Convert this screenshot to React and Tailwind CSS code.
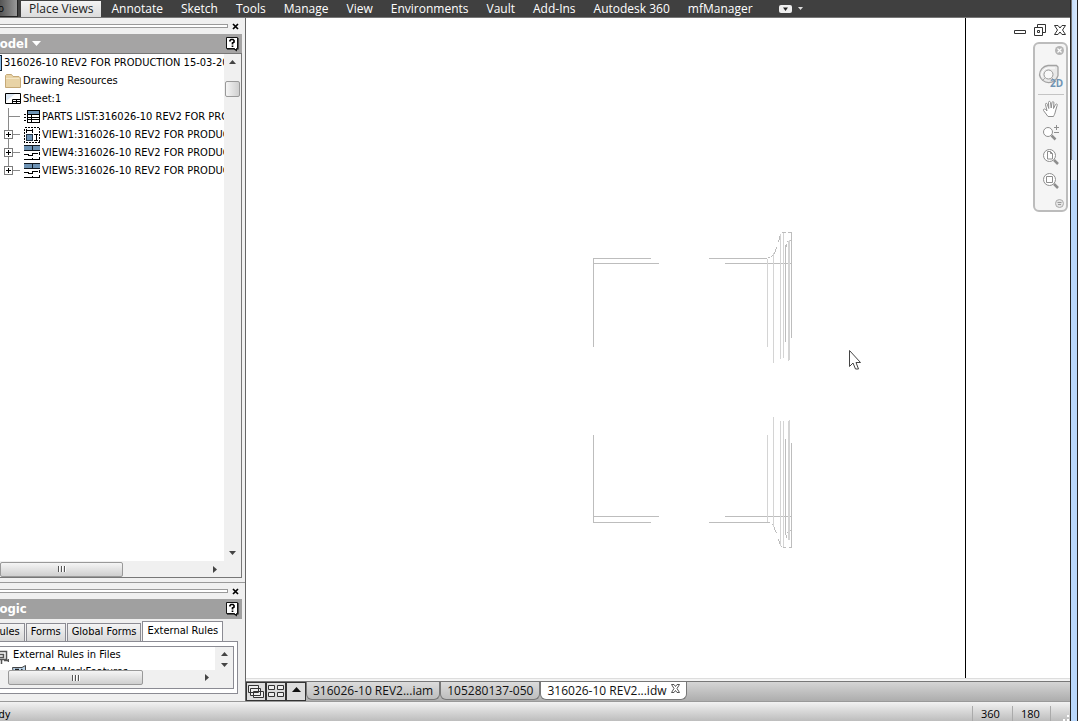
import { useState } from "react";

const ribbonTabs = [
  "Annotate",
  "Sketch",
  "Tools",
  "Manage",
  "View",
  "Environments",
  "Vault",
  "Add-Ins",
  "Autodesk 360",
  "mfManager",
];

const treeViews = [
  { label: "PARTS LIST:316026-10 REV2 FOR PRODUCTION", kind: "parts" },
  { label: "VIEW1:316026-10 REV2 FOR PRODUCTION", kind: "base" },
  { label: "VIEW4:316026-10 REV2 FOR PRODUCTION", kind: "section" },
  { label: "VIEW5:316026-10 REV2 FOR PRODUCTION", kind: "section" },
];

const documents = ["316026-10 REV2...iam", "105280137-050", "316026-10 REV2...idw"];

function Arrow({ dir = "up" }) {
  const paths = {
    up: "M1 6h7L4.500 2z",
    down: "M1 3h7L4.500 7z",
    right: "M3 1v7l4-3.500z",
  };
  return (
    <svg width="9" height="9" className="shrink-0" aria-hidden="true">
      <path d={paths[dir]} fill="#444" />
    </svg>
  );
}

function PanelGrip({ label }) {
  return (
    <div className="flex h-4 items-center gap-px pr-1">
      <div className="h-1 flex-1 border-y border-r border-[#9a9a9a] bg-white" />
      <button type="button" aria-label={`Close ${label}`} className="flex size-3 items-center justify-center">
        <svg width="7" height="7" aria-hidden="true">
          <path d="M1 1l5 5M6 1L1 6" stroke="#000" strokeWidth="1.7" />
        </svg>
      </button>
    </div>
  );
}

function HelpButton({ label }) {
  return (
    <button type="button" aria-label={`${label} help`} className="flex size-4 shrink-0">
      <svg width="15" height="16" viewBox="0 0 15 16" aria-hidden="true">
        <path d="M2 2h11.500v11.500h-1.500v2l-3-2H2z" fill="#000" />
        <path d="M1.500 1.500h11v11h-1v2l-2-2h-8z" fill="#fff" stroke="#111" />
        <path d="M5 5.500V4.500l1-1h2l1 1v1.500L7.500 7v1.500M7.500 9.500V11" fill="none" stroke="#000" strokeWidth="1.700" />
      </svg>
    </button>
  );
}

function Thumb({ className }) {
  return (
    <div
      className={`flex items-center justify-center gap-px rounded-xs border border-[#999] bg-linear-to-b from-[#f5f5f5] to-[#cfcfcf] ${className}`}
    >
      <svg width="8" height="6" shapeRendering="crispEdges" aria-hidden="true">
        <path d="M.5 0v6M3.500 0v6M6.500 0v6" stroke="#555" />
        <path d="M1.500 0v6M4.500 0v6M7.500 0v6" stroke="#fff" />
      </svg>
    </div>
  );
}

function FolderIcon() {
  return (
    <svg width="16" height="16" className="shrink-0" aria-hidden="true">
      <path d="M.5 14.500v-12l1-1h5l1.500 2h6l1.500 1.500v9.500z" fill="#e8d3a6" stroke="#c5a977" />
      <path d="M1 5.500h13" stroke="#f4e6c6" />
    </svg>
  );
}

function SheetIcon() {
  return (
    <svg width="16" height="16" className="shrink-0" aria-hidden="true">
      <path d="M.5 2.500h15v10H.5z" fill="#fff" stroke="#000" />
      <path d="M1 3h9L1 10z" fill="#dce8f4" />
      <path d="M7.500 12V8.500H15M7.500 10.500H15M11.500 8.500V12" fill="none" stroke="#000" />
    </svg>
  );
}

function ViewIcon({ kind }) {
  if (kind === "parts") {
    return (
      <svg width="16" height="16" className="shrink-0" shapeRendering="crispEdges" aria-hidden="true">
        <path d="M3.500 1.500h12v12h-12z" fill="#fff" stroke="#000" />
        <path d="M4 2h11v3H4z" fill="#6d93b5" />
        <path d="M4 5.500h11M4 8.500h11M4 10.500h11M7.500 5v8" stroke="#000" />
        <path d="M0 5.500h2M0 8.500h2M0 11.500h2" stroke="#000" />
      </svg>
    );
  }
  if (kind === "base") {
    return (
      <svg width="16" height="16" className="shrink-0" shapeRendering="crispEdges" aria-hidden="true">
        <rect x=".5" y=".5" width="15" height="15" fill="#fff" stroke="#000" strokeDasharray="2 1" />
        <path d="M2.500 7.500h6v6h-6z" fill="#6d93b5" stroke="#234" />
        <path d="M2.500 2v4M3 3.500h5M8.500 2v4M10 7.500h4M12 8v6M10 13.500h4" stroke="#000" />
      </svg>
    );
  }
  return (
    <svg width="16" height="16" className="shrink-0" shapeRendering="crispEdges" aria-hidden="true">
      <path d="M0 1h16v5H0z" fill="#6d93b5" />
      <path d="M0 .5h16M0 5.500h16M8.500 1v4" stroke="#101820" />
      <path d="M0 9.500h4.500v1h4v-2H14M0 14.500h8.500v-2M9 14.500h7M15.500 7v3M15.500 12v3" fill="none" stroke="#000" />
    </svg>
  );
}

function Branch({ expandable, last }) {
  return (
    <svg width="20" height="18" className="shrink-0" shapeRendering="crispEdges" aria-hidden="true">
      <path d={last ? "M4.500 0v8M4.500 8.500H16" : "M4.500 0v18M4.500 8.500H16"} stroke="#8a8a8a" />
      {expandable && (
        <>
          <rect x=".5" y="4.500" width="8" height="8" fill="#fff" stroke="#7c7c7c" />
          <path d="M2 8.500h5M4.500 6v5" stroke="#000" />
        </>
      )}
    </svg>
  );
}

function ModelPanel() {
  return (
    <section className="flex min-h-0 flex-1 flex-col">
      <PanelGrip label="Model" />
      <div className="mr-[3px] flex h-[19px] items-center justify-between overflow-hidden bg-[#a5a4a4] pr-px">
        <button type="button" className="-ml-3 flex items-center gap-1 text-[13px] font-bold text-white">
          Model
          <svg width="9" height="5" aria-hidden="true">
            <path d="M0 0h9L4.500 5z" fill="#fff" />
          </svg>
        </button>
        <HelpButton label="Model" />
      </div>
      <div className="mr-[3px] flex min-h-0 flex-1 flex-col border-t border-r border-b border-[#777] bg-[#f0f0f0]">
        <div className="flex min-h-0 flex-1">
          <ul className="min-w-0 flex-1 overflow-hidden bg-white text-[11px] whitespace-nowrap text-black">
            <li className="flex h-[18px] items-center gap-[2px] overflow-hidden">
              <span className="h-4 w-[2px] shrink-0 border-y border-r border-[#123] bg-[#8fc0ea]" />
              316026-10 REV2 FOR PRODUCTION 15-03-2013
            </li>
            <li className="flex h-[18px] items-center gap-[2px] overflow-hidden pl-[5px]">
              <FolderIcon />
              Drawing Resources
            </li>
            <li className="flex h-[18px] items-center gap-[2px] overflow-hidden pl-[5px]">
              <SheetIcon />
              Sheet:1
            </li>
            {treeViews.map((view, i) => (
              <li key={view.label} className="flex h-[18px] items-center overflow-hidden pl-1">
                <Branch expandable={i > 0} last={i === treeViews.length - 1} />
                <ViewIcon kind={view.kind} />
                <span className="ml-[2px] min-w-0 overflow-hidden">{view.label}</span>
              </li>
            ))}
          </ul>
          <div className="flex w-[17px] flex-col items-center justify-between py-1">
            <div className="flex flex-col items-center gap-[14px]">
              <Arrow dir="up" />
              <div className="h-4 w-[15px] rounded-xs border border-[#999] bg-linear-to-r from-[#f5f5f5] to-[#cfcfcf]" />
            </div>
            <Arrow dir="down" />
          </div>
        </div>
        <div className="flex h-4 items-center justify-between pr-[22px]">
          <Thumb className="h-[15px] w-[123px]" />
          <Arrow dir="right" />
        </div>
      </div>
    </section>
  );
}

function LogicPanel() {
  const tab =
    "flex h-[18px] items-center border border-b-0 border-[#8b8b93] bg-linear-to-b from-[#f4f4f4] to-[#d8d8d8] px-1";
  return (
    <section className="mt-1 flex h-[119px] flex-col border-t border-[#999]">
      <PanelGrip label="iLogic" />
      <div className="mr-[3px] flex h-5 shrink-0 items-center justify-between overflow-hidden bg-[#a0a0a0] pr-px">
        <h2 className="-ml-3 text-[13px] font-bold text-white">iLogic</h2>
        <HelpButton label="iLogic" />
      </div>
      <div role="tablist" className="flex shrink-0 items-end gap-px overflow-hidden pt-[2px] text-[11px] text-black">
        <button type="button" role="tab" className={`-ml-3 ${tab}`}>
          Rules
        </button>
        <button type="button" role="tab" className={tab}>
          Forms
        </button>
        <button type="button" role="tab" className={tab}>
          Global Forms
        </button>
        <button
          type="button"
          role="tab"
          aria-selected="true"
          className="flex h-5 items-center border border-b-0 border-[#8b8b93] bg-white px-1"
        >
          External Rules
        </button>
      </div>
      <div className="mr-[7px] h-[53px] shrink-0 border-t border-r border-b border-[#8b8b93] bg-white py-1 pr-[3px]">
        <div className="flex h-full flex-col border-t border-r border-b border-[#8b8b93] bg-[#f0f0f0]">
          <div className="flex min-h-0 flex-1">
            <ul className="flex-1 overflow-hidden bg-white text-[11px] text-black">
              <li className="flex h-[17px] items-center gap-1">
                <svg width="9" height="16" className="shrink-0" aria-hidden="true">
                  <path d="M0 3.500h6.500v8H0M0 6.500h3.500v3H0M8.500 11v3M4 12.500h4M1.500 12v4" fill="none" stroke="#555" strokeWidth="1.500" />
                </svg>
                External Rules in Files
              </li>
              <li className="flex h-4 items-center gap-2 pl-3">
                <svg width="14" height="14" className="shrink-0" aria-hidden="true">
                  <path d="M.5 2.500H10l3.500-2v8L10 12.500H2z" fill="#b8d2e8" stroke="#444" />
                  <path d="M3 4.500h4M5 5L3 11M10 4L8 11" stroke="#222" strokeWidth="1.500" />
                </svg>
                ASM_WorkFeatures
              </li>
            </ul>
            <div className="flex w-[18px] flex-col items-center justify-between pt-[3px] pb-px">
              <Arrow dir="up" />
              <Arrow dir="down" />
            </div>
          </div>
          <div className="flex h-[18px] shrink-0 items-start justify-between pr-[22px] pl-2">
            <Thumb className="h-[15px] w-[135px]" />
            <div className="flex h-[15px] items-center">
              <Arrow dir="right" />
            </div>
          </div>
        </div>
      </div>
    </section>
  );
}

function DrawingSheet() {
  return (
    <svg className="absolute top-0 left-0 h-full w-[825px]" shapeRendering="crispEdges" role="img" aria-label="Drawing sheet">
      <g transform="translate(-246 -18)" fill="none">
        <path d="M965.5 0v900" stroke="#000" />
        <g stroke="#bdbdbd">
          <path d="M593.5 347v-88.500H651M594 263.500h65M709 258.500h58M725 263.500h66M791.5 233v105M785.5 245v97" />
          <path d="M593.5 435v87.500H651M594 516.500h65M709 522.500h61M725 516.500h66M791.5 443v104M785.5 439v96" />
          <path d="M782 232.500h4M788 232.500h4M783 547.500h3M789 547.500h3" />
          <path d="M768 257.500h2M771 256.500h1M772 255.500h2M774.5 252v2M775.5 249v3M776.5 247v2M778.500 240v2M779.500 236v4M780.500 234v3" />
          <path d="M772 524.500h2M774.500 527v3M775.500 530v2M776.500 532v1M778.500 539v2M779.500 541v3M781 546.500h1" />
          <path d="M786.500 244v3M787 241.500h2M789 240.500h2M786.500 535v3M787 532.500h1M789 530.500h2" />
        </g>
        <g stroke="#d4d4d4">
          <path d="M767.5 259v88M773.5 253v110M780.5 234v125M783.5 233v125M788.5 241v120M789.5 240v120" />
          <path d="M767.5 435v87M773.5 417v110M780.5 421v125M783.5 421v126M788.5 421v119M789.5 420v120" />
        </g>
      </g>
      <path
        d="M603.500 332.500v16l3.500-3.500 2.500 6h3l-2.500-6.500h4.500z"
        fill="#fff"
        stroke="#444"
        shapeRendering="auto"
      />
    </svg>
  );
}

function NavigationBar() {
  const tool = "flex size-6 items-center justify-center";
  return (
    <nav
      aria-label="Navigation bar"
      className="flex w-[35px] flex-col items-center rounded-md border-2 border-[#bcbcbc] bg-[#f5f5f5] text-[#8e8e8e]"
    >
      <button type="button" aria-label="Close navigation bar" className="self-end pt-[2px] pr-[2px]">
        <svg width="9" height="9" aria-hidden="true">
          <circle cx="4.500" cy="4.500" r="4.500" fill="#b5b5b5" />
          <path d="M2.500 2.500l4 4M6.500 2.500l-4 4" stroke="#fff" strokeWidth="1.200" />
        </svg>
      </button>
      <button type="button" aria-label="2D steering wheel" className="mt-2 flex h-7 w-6 justify-center">
        <svg width="26" height="26" className="shrink-0" aria-hidden="true">
          <path d="M10 2.500h8.500l1.500 1.500v8.500A9.500 9.500 0 0 1 1.500 12 9.500 9.500 0 0 1 10 2.500z" fill="#e9e9e9" stroke="#a3a3a3" strokeWidth="1.300" />
          <path d="M4 14a7 7 0 0 1 6-9h7" fill="none" stroke="#fff" />
          <circle cx="10.500" cy="11.500" r="4.500" fill="#f8f8f8" stroke="#999" />
          <path d="M14 15l4 4M7 15l-3 3" stroke="#aaa" />
          <text x="12" y="24" fontSize="10" fontWeight="700" fill="#6f93b3" fontFamily="Open Sans, sans-serif">
            2D
          </text>
        </svg>
      </button>
      <div className="mt-[3px] mb-[2px] h-px w-[26px] bg-[#c4c4c4]" />
      <button type="button" aria-label="Pan" className={tool}>
        <svg width="18" height="18" fill="#fff" stroke="currentColor" aria-hidden="true">
          <path d="M6 16.500L1.500 10.500C1 9 2.500 8.500 3.500 9.500L5 11 3.500 4.500C3.300 3 5 3 5.300 4.200L6.800 8.500 6.500 2.500C6.500 1 8.300 1 8.500 2.500L9.200 8 10 2.500C10.300 1.200 12 1.500 11.900 2.800L11.500 8.500 13.500 4.500C14.200 3.300 15.600 4 15.200 5.300L13.500 11C13 14 12 15 11.500 16.500z" />
        </svg>
      </button>
      <button type="button" aria-label="Zoom" className={tool}>
        <svg width="18" height="18" fill="none" stroke="currentColor" aria-hidden="true">
          <circle cx="6" cy="8" r="4.500" fill="#fff" />
          <path d="M9.500 11.500l4 4" strokeWidth="2.500" />
          <path d="M14.500 1v5M12 3.500h5M12 8.500h5" />
        </svg>
      </button>
      <button type="button" aria-label="Zoom all" className={tool}>
        <svg width="18" height="18" fill="none" stroke="currentColor" aria-hidden="true">
          <circle cx="7.500" cy="7.500" r="6" fill="#fff" />
          <path d="M12 12l4 4" strokeWidth="2.500" />
          <path d="M5.500 3.500h3l2 2v5.500h-5zM8.500 3.500v2h2" />
        </svg>
      </button>
      <button type="button" aria-label="Zoom window" className={tool}>
        <svg width="18" height="18" fill="none" stroke="currentColor" aria-hidden="true">
          <circle cx="7.500" cy="7.500" r="6" fill="#fff" />
          <path d="M12 12l4 4" strokeWidth="2.500" />
          <path d="M4.500 4.500h6v6h-6z" />
        </svg>
      </button>
      <button type="button" aria-label="Customize" className="mt-[6px] self-end pr-[2px] pb-[2px]">
        <svg width="9" height="9" aria-hidden="true">
          <circle cx="4.500" cy="4.500" r="4" fill="#e4e4e4" stroke="#aaa" />
          <path d="M2.500 3.500h4M3 5.500h3" stroke="#999" />
        </svg>
      </button>
    </nav>
  );
}

function WindowButtons() {
  return (
    <div className="flex items-center gap-2 pr-[2px]">
      <button type="button" aria-label="Minimize">
        <svg width="12" height="12" aria-hidden="true">
          <path d="M.5 6.500h11v3H.5z" fill="#fff" stroke="#333" />
        </svg>
      </button>
      <button type="button" aria-label="Restore">
        <svg width="12" height="12" fill="#fff" stroke="#333" aria-hidden="true">
          <path d="M3.500.5h8v8h-8z" />
          <path d="M.5 3.500h8v8h-8zM3.500 6.500h2v2h-2z" />
        </svg>
      </button>
      <button type="button" aria-label="Close drawing">
        <svg width="12" height="12" aria-hidden="true">
          <path d="M.5 1.500h3.500l2 2.500 2-2.500h3.500L8.500 6l3 4.500H8L6 8l-2 2.500H.5L3.500 6z" fill="#fff" stroke="#333" />
        </svg>
      </button>
    </div>
  );
}

function DocumentTabs() {
  const [active, setActive] = useState(2);
  const windowButton = "flex w-5 items-center justify-center border border-[#333] bg-[#ddd]";
  return (
    <div className="flex h-5 border-t border-[#777] bg-linear-to-b from-[#d5d5d5] to-[#adadad]">
      <div className="flex">
        <button type="button" aria-label="Cascade" className={windowButton}>
          <svg width="16" height="15" fill="#eee" stroke="#333" aria-hidden="true">
            <path d="M.5 1.500h10v7H.5zM2.500 4.500h10v7h-10zM5.500 7.500h10v6h-10z" />
          </svg>
        </button>
        <button type="button" aria-label="Tile" className={windowButton}>
          <svg width="16" height="13" fill="#eee" stroke="#333" aria-hidden="true">
            <path d="M.5.5h6v4h-6zM9.500.5h6v4h-6zM.5 7.500h6v4h-6zM9.500 7.500h6v4h-6z" />
          </svg>
        </button>
        <button type="button" aria-label="List documents" className={windowButton}>
          <svg width="9" height="11" aria-hidden="true">
            <path d="M0 6h9L4.500 1z" fill="#111" />
          </svg>
        </button>
      </div>
      <div role="tablist" className="flex text-[12px] text-[#111]">
        {documents.map((doc, i) => (
          <button
            key={doc}
            type="button"
            role="tab"
            aria-selected={active === i}
            onClick={() => setActive(i)}
            className={`flex h-[18px] items-center gap-1 rounded-b-md border-x border-b border-[#777] px-[6px] ${
              active === i ? "bg-white" : "bg-linear-to-b from-[#dcdcdc] to-[#bdbdbd]"
            }`}
          >
            {doc}
            {i === 2 && (
              <svg width="9" height="9" className="mb-1" aria-hidden="true">
                <path d="M.5.5h2.500l1.500 2 1.500-2h2.500L6 4.500l2.500 4H6l-1.500-2-1.500 2H.5l2.500-4z" fill="#fff" stroke="#555" />
              </svg>
            )}
          </button>
        ))}
      </div>
    </div>
  );
}

export default function App() {
  return (
    <div className="flex h-screen overflow-hidden bg-white pr-[13px] font-['Open_Sans',sans-serif]">
      <div className="flex min-w-0 flex-1 flex-col">
        <header className="flex h-[18px] shrink-0 items-center border-b border-[#777] bg-[#404040] text-[12px] text-white">
          <div className="flex h-full gap-[3px]">
            <button
              type="button"
              className="flex w-[18px] items-center overflow-hidden border-r border-b border-[#222] bg-linear-to-r from-[#555] to-[#999] text-[10px] text-black"
            >
              <span className="-ml-3">Pro</span>
            </button>
            <button type="button" className="mt-px flex items-center bg-linear-to-b from-[#f4f4f4] to-[#dcdcdc] px-2 text-[#222]">
              Place Views
            </button>
          </div>
          <nav className="ml-[10px] flex gap-[18px] whitespace-nowrap">
            {ribbonTabs.map((tab) => (
              <button key={tab} type="button">
                {tab}
              </button>
            ))}
          </nav>
          <button type="button" aria-label="Ribbon options" className="ml-[26px] flex items-center gap-[6px]">
            <svg width="13" height="8" aria-hidden="true">
              <rect width="13" height="8" rx="2" fill="#eee" />
              <path d="M4 2.500h5L6.500 6z" fill="#222" />
            </svg>
            <svg width="5" height="3" aria-hidden="true">
              <path d="M0 0h5L2.500 3z" fill="#ddd" />
            </svg>
          </button>
        </header>

        <div className="flex min-h-0 flex-1">
          <aside className="flex w-[245px] shrink-0 flex-col bg-[#f0f0f0] font-['DejaVu_Sans_Condensed','DejaVu_Sans',sans-serif]">
            <ModelPanel />
            <LogicPanel />
          </aside>
          <main className="flex min-w-0 flex-1 flex-col border-l border-[#666]">
            <div className="relative flex min-h-0 flex-1 flex-col items-end bg-white">
              <DrawingSheet />
              <div className="relative flex flex-col items-end gap-[6px] pt-[6px] pr-[2px]">
                <WindowButtons />
                <NavigationBar />
              </div>
            </div>
            <div className="h-[3px] border-t border-[#ddd] bg-[#f4f4f4]" />
            <DocumentTabs />
          </main>
        </div>

        <footer className="flex h-5 shrink-0 items-stretch overflow-hidden border-t border-[#999] bg-linear-to-b from-[#f2f2f2] to-[#bdbdbd] text-[11px] text-black">
          <p className="-ml-5 flex flex-1 items-end font-['DejaVu_Sans_Condensed','DejaVu_Sans',sans-serif] leading-3">
            Ready
          </p>
          <div className="mt-1 flex">
            <span className="flex w-10 items-center border-l border-[#aaa] px-2 pt-[2px]">360</span>
            <span className="flex w-[38px] items-center border-l border-[#aaa] px-2 pt-[2px]">180</span>
            <svg width="20" height="15" className="border-l border-[#aaa]" aria-hidden="true">
              <path d="M16 9h2v2h-2zM16 13h2v2h-2zM12 13h2v2h-2z" fill="#fff" />
            </svg>
          </div>
        </footer>
      </div>
      <div className="flex w-2 shrink-0 flex-col border-x border-[#222] bg-[#b9d7fb]">
        <div className="h-40 border-l border-[#777] bg-linear-to-r from-[#c4dcf9] to-[#d8e9fd]" />
        <div className="h-5 bg-[#e8eef6]" />
      </div>
    </div>
  );
}
